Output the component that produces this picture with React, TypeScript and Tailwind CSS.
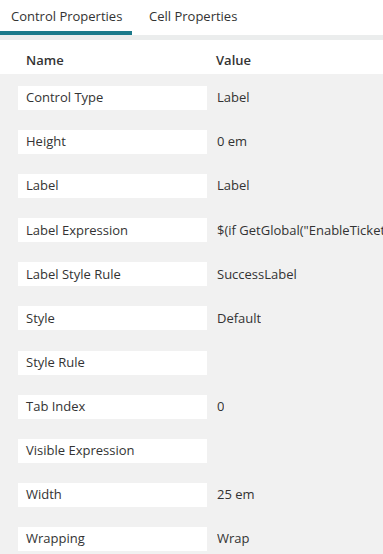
import React from 'react';

const ROWS: { name: string; value: string }[] = [
  { name: 'Control Type', value: 'Label' },
  { name: 'Height', value: '0 em' },
  { name: 'Label', value: 'Label' },
  { name: 'Label Expression', value: '$(if GetGlobal("EnableTicketing") then "Success" else "")' },
  { name: 'Label Style Rule', value: 'SuccessLabel' },
  { name: 'Style', value: 'Default' },
  { name: 'Style Rule', value: '' },
  { name: 'Tab Index', value: '0' },
  { name: 'Visible Expression', value: '' },
  { name: 'Width', value: '25 em' },
  { name: 'Wrapping', value: 'Wrap' },
];

export default function App() {
  return (
    <div
      className="w-[383px] h-[554px] overflow-hidden bg-[#f1f1f1] text-[13px] text-[#333333]"
      style={{ fontFamily: '"Open Sans", "Liberation Sans", sans-serif' }}
    >
      {/* tabs */}
      <div className="flex h-[35px] bg-white">
        <div className="w-[132px] h-full flex flex-col">
          <div className="flex-1 flex items-center pl-[11px] pt-[2px]">Control Properties</div>
          <div className="h-[4px] bg-[#1b7a8b]" />
        </div>
        <div className="flex items-center pl-[17px] pb-[2px]">Cell Properties</div>
      </div>
      <div className="h-[5px] bg-[#ebeded]" />

      {/* header */}
      <div className="flex items-center h-[34px] bg-white font-semibold pt-[7px]">
        <div className="w-[216px] pl-[26px]">Name</div>
        <div>Value</div>
      </div>

      {/* rows */}
      <div className="pt-[12px]">
        {ROWS.map((row) => (
          <div key={row.name} className="flex items-start h-[44.1px]">
            <div className="ml-[18px] w-[189px] h-[24px] bg-white flex items-center pl-[8px] shrink-0">
              {row.name}
            </div>
            <div className="ml-[10px] h-[24px] flex items-center whitespace-nowrap overflow-hidden">{row.value}</div>
          </div>
        ))}
      </div>
    </div>
  );
}
